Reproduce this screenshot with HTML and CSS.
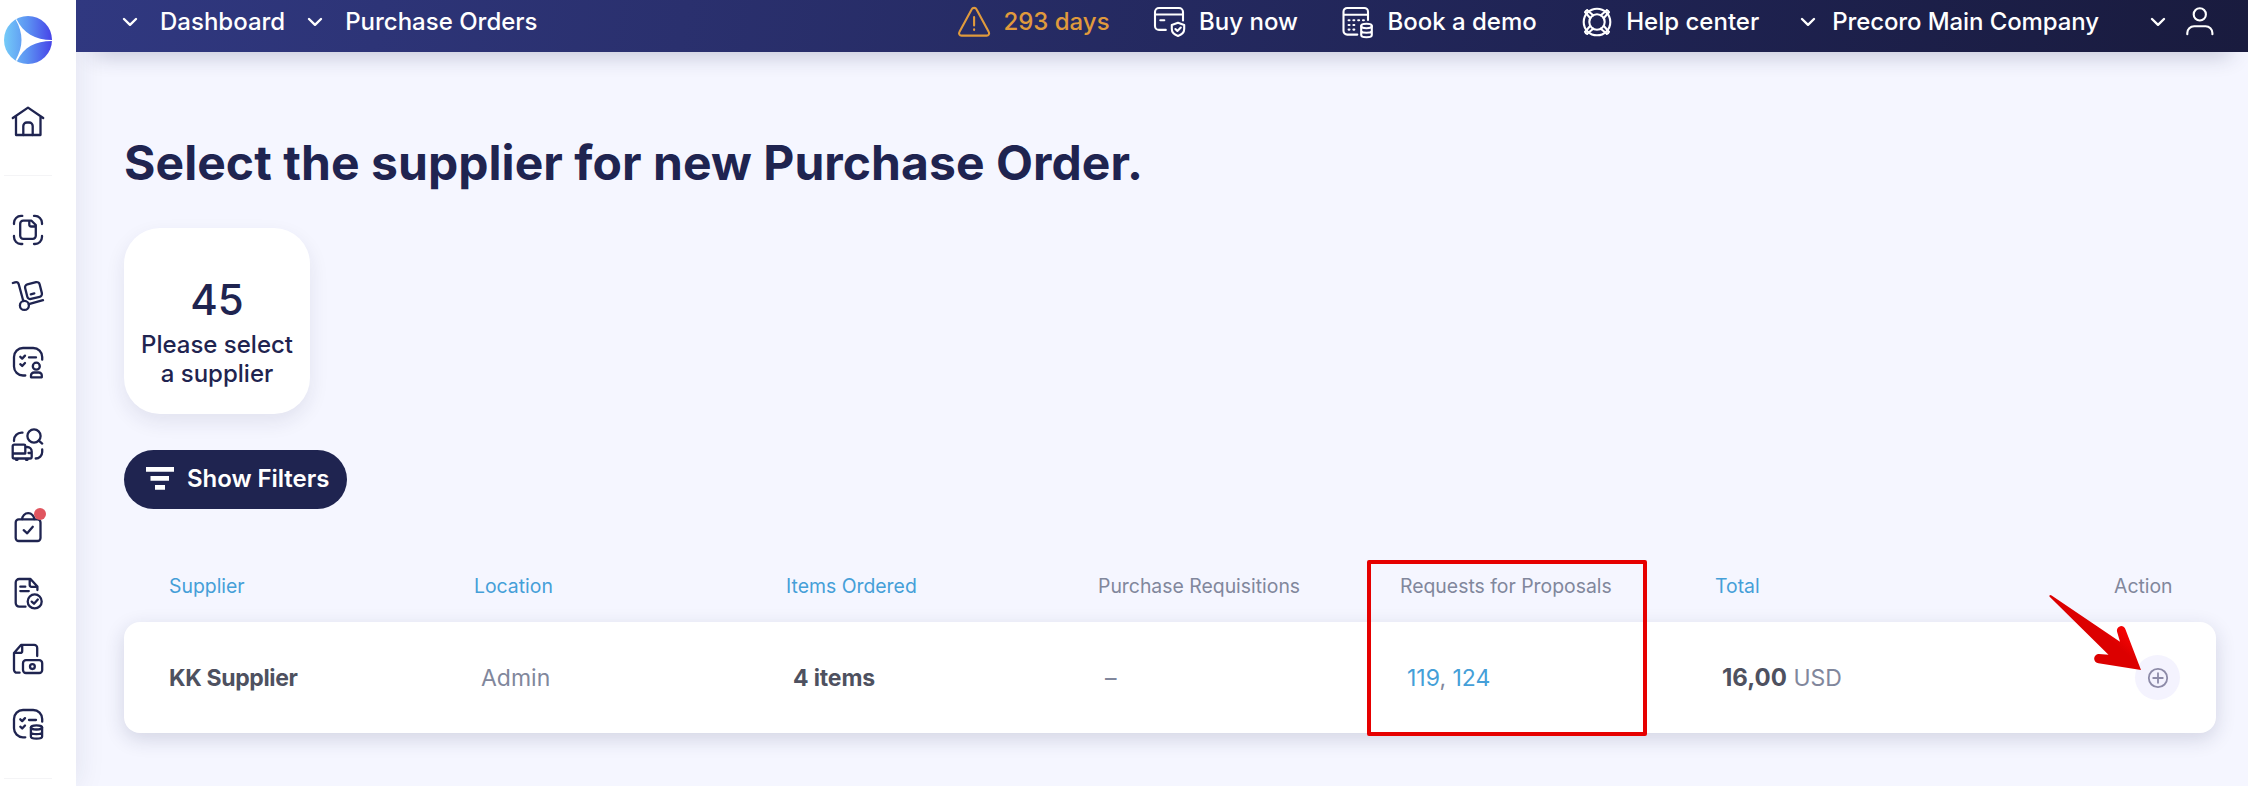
FILE: index.html
```html
<!DOCTYPE html>
<html lang="en">
  <head>
    <meta charset="UTF-8" />
    <meta name="viewport" content="width=device-width, initial-scale=1.0" />
    <title>Purchase Orders</title>
    <link rel="stylesheet" href="styles.css">
  </head>
  <body>
    <nav class="sidebar">
      <a class="logo" href="#">
        <svg width="48" height="48" viewBox="0 0 48 48">
          <defs>
            <linearGradient id="logoFill" x1="0" y1="0" x2="1" y2="0">
              <stop offset="0" stop-color="#74cbf8" />
              <stop offset="0.5" stop-color="#5c92f2" />
              <stop offset="1" stop-color="#4643e8" />
            </linearGradient>
          </defs>
          <circle cx="24" cy="24" r="24" fill="url(#logoFill)" />
          <path d="M12.6 3.2 C19 17 31 23.8 48 24 V24.9 C31 25 20 31 13 45 L11.6 44.2 C19.5 31 19.5 17 11.6 3.6 Z" fill="#fff" />
        </svg>
      </a>
      <a class="side-link home" href="#">
        <svg class="icon" viewBox="0 0 36 36">
          <path d="M2.8 15 L18 4.6 L33.2 15 M6 13.5 V32 H30.5 V13.5" />
          <path d="M13.3 32 V23 a3.5 3.5 0 0 1 3.5 -3.5 h2.4 a3.5 3.5 0 0 1 3.5 3.5 V32" />
        </svg>
      </a>
      <hr class="divider" />
      <a class="side-link scan" href="#">
        <svg class="icon" viewBox="0 0 36 36">
          <path d="M12.3 3.9 H11 a7 7 0 0 0 -7 7 V12 M24 3.9 h1 a7 7 0 0 1 7 7 V12 M32 24 v1 a7 7 0 0 1 -7 7 h-1 M12.3 32 H11 a7 7 0 0 1 -7 -7 v-1" />
          <path d="M21.5 8.7 H13.2 a3 3 0 0 0 -3 3 V23.8 a3 3 0 0 0 3 3 H22.8 a3 3 0 0 0 3 -3 V13 Z M19.3 8.9 V12.5 a2 2 0 0 0 2 2 H25.7" />
        </svg>
      </a>
      <a class="side-link cart" href="#">
        <svg class="icon" viewBox="0 0 36 36">
          <path d="M2.8 5 L5 4.3 Q8 3.5 8.8 6.5 L13.3 23 M18.8 26.2 L33 22.2" />
          <circle cx="14.4" cy="27.4" r="4.5" />
          <rect x="16" y="5.1" width="15" height="15" rx="3" transform="rotate(-14 23.5 12.6)" />
          <path d="M20.8 16.3 L24.3 15.4" />
        </svg>
      </a>
      <a class="side-link tasks" href="#">
        <svg class="icon" viewBox="0 0 36 36">
          <path d="M32.2 15.7 V13 a9 9 0 0 0 -9 -9 H13 a9 9 0 0 0 -9 9 V22.5 a9 9 0 0 0 9 9 H15.3" />
          <path d="M10.3 12.8 L12.2 14.6 L15 11.6 M19 13.4 H26 M10.3 20.2 L12.2 22 L15 19" />
          <circle cx="26.3" cy="22.2" r="3.5" />
          <path d="M21 33.3 V31.5 a3 3 0 0 1 3 -3 h4.8 a3 3 0 0 1 3 3 V33.3 Z" />
        </svg>
      </a>
      <a class="side-link delivery" href="#">
        <svg class="icon" viewBox="0 0 36 36">
          <circle cx="24" cy="10" r="6.6" />
          <path d="M28.8 14.6 L32.2 17.6 M12.5 6.7 H11.5 a7.5 7.5 0 0 0 -7.5 7.5 V15 M32.2 23.5 V26 a6.5 6.5 0 0 1 -6.5 6.5" />
          <path d="M15.3 27.5 V20 a1.3 1.3 0 0 0 -1.3 -1.3 H4.2 a1.5 1.5 0 0 0 -1.5 1.5 V31 a1.5 1.5 0 0 0 1.5 1.5 H20 a1.7 1.7 0 0 0 1.7 -1.7 V25.5 a4.5 4.5 0 0 0 -4.5 -4.5 H15.3 M2.7 27.5 H15.3 M18.5 27 H21.5 M6 33.8 h1.5 M16 33.8 h1.5" />
        </svg>
      </a>
      <a class="side-link bag" href="#">
        <svg class="icon" viewBox="0 0 36 36">
          <rect x="5.7" y="11.4" width="24.8" height="21.6" rx="3" />
          <path d="M12.2 11.2 a6 6 0 0 1 12 0 M13.7 22.2 L17.2 25.3 L22.8 18.8" />
          <circle class="badge" cx="30" cy="6" r="6" />
        </svg>
      </a>
      <a class="side-link receipt" href="#">
        <svg class="icon" viewBox="0 0 36 36">
          <path d="M15.5 31.7 H9.3 a3.6 3.6 0 0 1 -3.6 -3.6 V7.6 a3.6 3.6 0 0 1 3.6 -3.6 H20.5 L27.4 11.5 V15 M19.7 4.2 V9.8 a2 2 0 0 0 2 2 H27.2 M10.3 11.7 H15.3 M10.3 16.1 H18.8" />
          <circle cx="24.7" cy="26.4" r="7" />
          <path d="M21.7 26.6 L24 28.7 L27.8 24.5" />
        </svg>
      </a>
      <a class="side-link payment" href="#">
        <svg class="icon" viewBox="0 0 36 36">
          <path d="M9.6 31.7 H7 a3 3 0 0 1 -3 -3 V12 L11 3.9 H24.2 a3 3 0 0 1 3 3 V15 M12.2 4.2 V9.9 a2 2 0 0 1 -2 2 H4.2" />
          <rect x="13" y="19.2" width="19.2" height="12.8" rx="3" />
          <circle cx="22.4" cy="25.6" r="2.4" />
        </svg>
      </a>
      <a class="side-link budget" href="#">
        <svg class="icon" viewBox="0 0 36 36">
          <path d="M32.2 15.7 V13 a9 9 0 0 0 -9 -9 H13 a9 9 0 0 0 -9 9 V22.3 a9 9 0 0 0 9 9 H15.3" />
          <path d="M10.3 13.3 L12.2 15.1 L15 12.1 M19 14 H26 M10.3 20.7 L12.2 22.5 L15 19.5" />
          <ellipse cx="26.5" cy="21.4" rx="5.6" ry="2.1" />
          <path d="M20.9 21.4 V30.6 c0 2.8 11.2 2.8 11.2 0 V21.4 M20.9 26 c0 2.8 11.2 2.8 11.2 0" />
        </svg>
      </a>
      <hr class="divider" />
    </nav>

    <div class="page">
      <header class="topbar">
        <div class="crumbs">
          <svg class="chevron" viewBox="0 0 16 10"><path d="M2 2 L8 7.8 L14 2" /></svg>
          <a class="crumb" href="#">Dashboard</a>
          <svg class="chevron" viewBox="0 0 16 10"><path d="M2 2 L8 7.8 L14 2" /></svg>
          <a class="crumb" href="#">Purchase Orders</a>
        </div>
        <div class="tools">
          <a class="tool trial" href="#">
            <svg class="icon" viewBox="0 0 36 36">
              <path d="M15.6 5.4 a2.8 2.8 0 0 1 5 0 L32.8 28 a2.4 2.4 0 0 1 -2.1 3.6 H5.5 a2.4 2.4 0 0 1 -2.1 -3.6 Z M18.1 13 V21.5 M18.1 25.3 V26" />
            </svg>
            <span>293 days</span>
          </a>
          <a class="tool buy" href="#">
            <svg class="icon" viewBox="0 0 36 36">
              <path d="M13.8 25.9 H7 a4 4 0 0 1 -4 -4 V8 a4 4 0 0 1 4 -4 H27 a4 4 0 0 1 4 4 V16.5 M3 10.5 H31 M8.3 16.3 H12.3" />
              <path d="M26 18.8 L32.2 21 V25 c0 3.3 -2.6 5.7 -6.2 6.9 c-3.6 -1.2 -6.2 -3.6 -6.2 -6.9 V21 Z M23.4 25 L25.4 27 L28.8 23.6" />
            </svg>
            <span>Buy now</span>
          </a>
          <a class="tool demo" href="#">
            <svg class="icon" viewBox="0 0 36 36">
              <path d="M17.3 30.6 H7.2 a3.7 3.7 0 0 1 -3.7 -3.7 V7.7 a3.7 3.7 0 0 1 3.7 -3.7 H24.3 a3.7 3.7 0 0 1 3.7 3.7 V16 M3.5 10.8 H28" />
              <path d="M8.6 16.3 h.9 M13.4 16.3 h.9 M18.2 16.3 h.9 M23 16.3 h.9 M8.6 21 h.9 M13.4 21 h.9 M8.6 25.6 h.9 M13.4 25.6 h.9" />
              <ellipse cx="26.5" cy="22" rx="5.3" ry="2.2" />
              <path d="M21.2 22 V31 c0 3 10.6 3 10.6 0 V22 M21.2 26.5 c0 3 10.6 3 10.6 0" />
            </svg>
            <span>Book a demo</span>
          </a>
          <a class="tool help" href="#">
            <svg class="icon" viewBox="0 0 36 36">
              <circle cx="18" cy="18" r="13.3" />
              <circle cx="18" cy="18" r="7.7" />
              <path d="M8.2 6.2 L14.2 11.3 M6.2 8.2 L11.3 14.2 M27.8 6.2 L21.8 11.3 M29.8 8.2 L24.7 14.2 M8.2 29.8 L14.2 24.7 M6.2 27.8 L11.3 21.8 M27.8 29.8 L21.8 24.7 M29.8 27.8 L24.7 21.8" />
              <path d="M6.2 8.2 Q6.5 6.5 8.2 6.2 M27.8 6.2 Q29.5 6.5 29.8 8.2 M29.8 27.8 Q29.5 29.5 27.8 29.8 M8.2 29.8 Q6.5 29.5 6.2 27.8" />
            </svg>
            <span>Help center</span>
          </a>
          <a class="company" href="#">
            <svg class="chevron" viewBox="0 0 16 10"><path d="M2 2 L8 7.8 L14 2" /></svg>
            <span>Precoro Main Company</span>
          </a>
          <a class="account" href="#">
            <svg class="chevron" viewBox="0 0 16 10"><path d="M2 2 L8 7.8 L14 2" /></svg>
            <svg class="icon" viewBox="0 0 36 36">
              <circle cx="17.8" cy="10.4" r="6.1" />
              <path d="M5.3 30.3 V29 a6.8 6.8 0 0 1 6.8 -6.8 H23.6 a6.8 6.8 0 0 1 6.8 6.8 V30.3" />
            </svg>
          </a>
        </div>
      </header>

      <main class="content">
        <h1>Select the supplier for new Purchase Order.</h1>

        <div class="step-card">
          <span class="step-count">45</span>
          <span class="step-text">Please select<br />a supplier</span>
        </div>

        <button type="button" class="filters">
          <svg width="28" height="23" viewBox="0 0 28 23">
            <path d="M0 0 H28 V4.7 H0 Z M4.5 9 H23 V13.7 H4.5 Z M9 18 H19 V22.7 H9 Z" fill="#fff" />
          </svg>
          Show Filters
        </button>

        <section class="suppliers">
          <div class="row head">
            <a href="#">Supplier</a>
            <a href="#">Location</a>
            <a href="#">Items Ordered</a>
            <span>Purchase Requisitions</span>
            <span>Requests for Proposals</span>
            <a href="#">Total</a>
            <span class="action-title">Action</span>
          </div>
          <div class="row item">
            <strong class="name">KK Supplier</strong>
            <span>Admin</span>
            <strong>4 items</strong>
            <span>–</span>
            <span><a href="#">119</a>, <a href="#">124</a></span>
            <span><b class="sum">16,00</b> USD</span>
            <button type="button" class="add">
              <svg width="22" height="22" viewBox="0 0 22 22">
                <path d="M11 6.2 V15.8 M6.2 11 H15.8" />
                <circle cx="11" cy="11" r="9.2" />
              </svg>
            </button>
          </div>

          <!-- callouts over the table -->
          <div class="mark"></div>
          <svg class="arrow" width="96" height="80" viewBox="0 0 96 80">
            <defs>
              <linearGradient id="arrowFill" x1="0.62" y1="0.55" x2="0.76" y2="0.42">
                <stop offset="0" stop-color="#dc0000" />
                <stop offset="1" stop-color="#f40404" />
              </linearGradient>
            </defs>
            <path d="M3.6 2.4 Q1 1 1.4 3.6 L60.5 61.7 L51 61 A4.6 4.6 0 0 0 50.5 70.2 L93 77 L77.5 36.5 A4.3 4.3 0 0 0 69 38.5 L72 48.7 Z" fill="url(#arrowFill)" />
          </svg>
        </section>
      </main>
    </div>
  </body>
</html>
```
FILE: styles.css
```css
* {
  box-sizing: border-box;
}

body {
  display: flex;
  height: 786px;
  margin: 0;
  overflow: hidden;
  background-color: #f5f6ff;
  color: #1f2450;
  font-family: "Inter", "Liberation Sans", sans-serif;
  font-size: 24px;
}

a {
  color: inherit;
  text-decoration: none;
}

.icon {
  display: block;
  flex: none;
  width: 36px;
  height: 36px;
  fill: none;
  stroke: currentColor;
  stroke-width: 2.1;
  stroke-linecap: round;
  stroke-linejoin: round;
}

/* sidebar */

.sidebar {
  position: relative;
  flex: none;
  display: flex;
  flex-direction: column;
  width: 76px;
  padding: 16px 0 0 4px;
  background-color: #fff;
  box-shadow: 0 0 30px rgba(31, 36, 80, 0.1);
}

.sidebar .icon {
  stroke-width: 2.3;
}

.logo svg {
  display: block;
}

.side-link {
  margin-left: 6px;
}

.divider {
  flex: none;
  width: 48px;
  height: 1px;
  margin: 36px 0 0;
  border: none;
  background-color: #f4f4f6;
}

.home {
  margin-top: 39px;
}

.scan {
  margin-top: 36px;
}

.cart,
.tasks,
.payment {
  margin-top: 30px;
}

.delivery,
.bag {
  margin-top: 46px;
}

.receipt {
  margin-top: 31px;
}

.budget {
  margin-top: 29px;
}

.sidebar .badge {
  fill: #e0555f;
  stroke: none;
}

/* top bar */

.page {
  flex: 1;
  min-width: 0;
}

.topbar {
  position: relative;
  display: flex;
  justify-content: space-between;
  height: 52px;
  padding: 4px 30px 12px 46px;
  background: linear-gradient(100deg, #303880 0%, #2a306e 28%, #1f2353 70%, #191b3e 100%);
  box-shadow: 0 20px 22px -18px rgba(31, 36, 80, 0.3);
  color: #fff;
  font-weight: 500;
  line-height: 29px;
}

.crumbs,
.tools,
.tool,
.company,
.account {
  display: flex;
  align-items: center;
}

.crumb,
.tool span,
.company span {
  padding-bottom: 1px;
}

.chevron {
  flex: none;
  width: 16px;
  height: 10px;
  fill: none;
  stroke: #fff;
  stroke-width: 2.4;
  stroke-linecap: round;
  stroke-linejoin: round;
}

.crumb {
  margin-left: 22px;
}

.crumb + .chevron {
  margin-left: 22px;
}

.tool {
  gap: 11px;
}

.tool + .tool {
  margin-left: 42.5px;
}

.trial {
  color: #e09a3c;
}

.company {
  gap: 16px;
  margin-left: 41px;
  letter-spacing: -0.1px;
}

.account {
  gap: 16px;
  margin-left: 51px;
}

/* content */

.content {
  padding: 82px 32px 0 48px;
}

h1 {
  margin: 0;
  font-size: 48px;
  font-weight: 700;
  letter-spacing: 0.06px;
  line-height: 58px;
}

.step-card {
  display: flex;
  flex-direction: column;
  align-items: center;
  width: 186px;
  height: 186px;
  margin-top: 36px;
  padding-top: 46px;
  border-radius: 36px;
  background-color: #fff;
  box-shadow: 0 8px 20px rgba(31, 36, 80, 0.09);
  font-weight: 500;
  text-align: center;
}

.step-count {
  font-size: 42px;
  line-height: 52px;
}

.step-text {
  margin-top: 4px;
  line-height: 29px;
}

.filters {
  display: flex;
  align-items: center;
  gap: 13px;
  width: 223px;
  height: 59px;
  margin-top: 36px;
  padding: 0 0 2px 22px;
  border: none;
  border-radius: 30px;
  background-color: #1f2450;
  color: #fff;
  font-family: inherit;
  font-size: 24px;
  font-weight: 600;
  letter-spacing: -0.05px;
  cursor: pointer;
}

/* suppliers table */

.suppliers {
  position: relative;
  margin-top: 51px;
}

.row {
  display: grid;
  grid-template-columns: 305px 312px 312px 302px 315px 1fr 110px;
  align-items: center;
  padding-left: 45px;
  color: #81879c;
}

.row a {
  color: #459fd8;
}

.head {
  height: 62px;
  padding-bottom: 10px;
  font-size: 19.4px;
}

.item {
  height: 111px;
  border-radius: 16px;
  background-color: #fff;
  box-shadow: 0 6px 20px rgba(31, 36, 80, 0.16);
  font-size: 23px;
}

.item > * {
  padding-left: 7px;
}

.item strong {
  letter-spacing: -0.15px;
}

.item .name {
  padding-left: 0;
  letter-spacing: -0.35px;
}

strong,
.sum {
  color: #4e5160;
  font-weight: 700;
}

.sum {
  font-size: 24px;
}

.action-title {
  padding-left: 8px;
}

.item .add {
  display: flex;
  align-items: center;
  justify-content: center;
  width: 45px;
  height: 45px;
  margin-left: 29px;
  padding: 0;
  border: none;
  border-radius: 50%;
  background-color: #f4f3fe;
  cursor: pointer;
}

.add svg {
  fill: none;
  stroke: #8d8ba8;
  stroke-width: 1.8;
  stroke-linecap: round;
}

.mark {
  position: absolute;
  top: 0;
  left: 1243px;
  width: 280px;
  height: 176px;
  border: 4px solid #e60000;
  border-radius: 2px;
}

.arrow {
  position: absolute;
  top: 33px;
  left: 1924px;
}
```
